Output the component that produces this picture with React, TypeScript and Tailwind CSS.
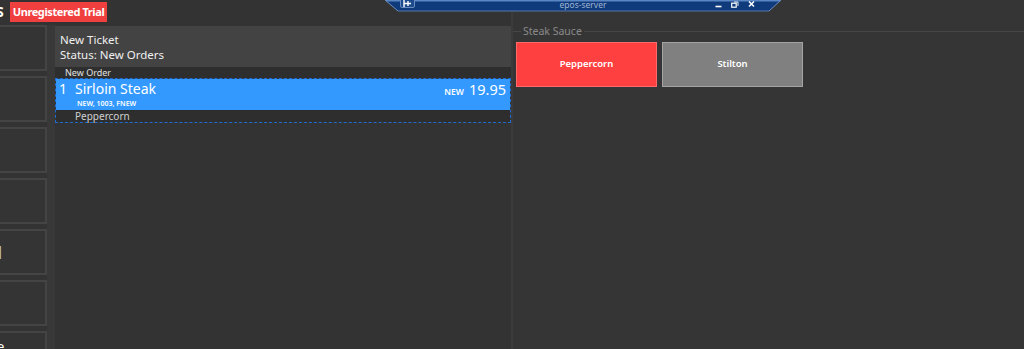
import React from 'react'

const FONT = { fontFamily: '"Noto Sans", "Open Sans", sans-serif' }

function LeftBox({ children }: { children?: React.ReactNode }) {
  return (
    <div className="relative -ml-[3px] h-[46px] shrink-0 border-2 border-[#444444] bg-[#343434]">
      {children}
    </div>
  )
}

function TitleBar() {
  return (
    <div className="absolute left-[385px] top-0 h-[12px] w-[396px]">
      <svg width="396" height="12" className="absolute inset-0">
        <polygon points="0,0 396,0 384,11 13,11" fill="#0f3b7c" />
        <polygon points="0,0 396,0 395,1.5 1.5,1.5" fill="#5a86c4" />
        <line x1="13" y1="11" x2="384" y2="11" stroke="#5577a8" strokeWidth="1" />
        <line x1="0" y1="0" x2="13" y2="11" stroke="#6d8fbf" strokeWidth="1" />
        <line x1="396" y1="0" x2="384" y2="11" stroke="#6d8fbf" strokeWidth="1" />
      </svg>
      <div className="absolute left-[15px] top-[-2px] flex h-[10px] w-[15px] items-center justify-center rounded-[2px] border border-[#6b8cc0] bg-[#1d4a8c]">
        <svg width="9" height="7" viewBox="0 0 9 7">
          <path d="M1 0v7M1 3.5h7M5 1v5" stroke="#ffffff" strokeWidth="1.4" fill="none" />
        </svg>
      </div>
      <div className="absolute left-0 right-0 top-0 text-center text-[8.5px] leading-[9px] text-[#9fb3d3]" style={FONT}>
        epos-server
      </div>
      {/* window controls */}
      <div className="absolute left-[330px] top-[1px] flex items-center gap-[9px]">
        <svg width="7" height="7" viewBox="0 0 7 7">
          <path d="M0.5 5.5h6" stroke="#ffffff" strokeWidth="1.6" />
        </svg>
        <svg width="8" height="7" viewBox="0 0 8 7">
          <rect x="0.7" y="2.2" width="4.5" height="4" stroke="#ffffff" strokeWidth="1.2" fill="none" />
          <path d="M3 1h4v4" stroke="#ffffff" strokeWidth="0.9" fill="none" />
        </svg>
        <svg width="7" height="7" viewBox="0 0 7 7">
          <path d="M1 0.5l5 5M6 0.5l-5 5" stroke="#ffffff" strokeWidth="1.5" />
        </svg>
      </div>
    </div>
  )
}

export default function App() {
  return (
    <div className="relative flex h-[349px] w-[1024px] flex-col overflow-hidden bg-[#333333] text-white" style={FONT}>
      <TitleBar />

      <div className="flex h-[25px] shrink-0 items-start">
        <span className="-ml-[4px] mt-[3px] text-[14px] font-bold leading-[18px] text-white">S</span>
        <div className="ml-[6px] mt-[2px] flex h-[20px] items-center bg-[#f03f3f] px-[3px] text-[11px] font-bold tracking-[-0.4px] text-white">
          Unregistered Trial
        </div>
      </div>

      <div className="flex flex-1">
        <div className="flex w-[47px] shrink-0 flex-col gap-[5px]">
          <LeftBox />
          <LeftBox />
          <LeftBox />
          <LeftBox />
          <LeftBox>
            <span className="absolute left-[-2px] top-[14px] text-[12px] leading-[14px] text-[#dddddd]">|</span>
          </LeftBox>
          <LeftBox />
          <LeftBox>
            <span className="absolute left-[-2px] top-[6px] text-[13px] leading-[14px] text-white">e</span>
          </LeftBox>
        </div>

        <div className="w-[8px] shrink-0 bg-[#383838]" />

        <div className="flex w-[456px] shrink-0 flex-col bg-[#333333] pt-[1px]">
          <div className="flex h-[41px] flex-col justify-center bg-[#434343] pl-[5px] text-[11.5px] leading-[15px] text-[#f0f0f0]">
            <div>New Ticket</div>
            <div>Status: New Orders</div>
          </div>
          <div className="h-[11px] bg-[#2e2e2e] pl-[10px] text-[9px] leading-[11px] text-[#e0e0e0]">New Order</div>
          <div className="border border-dashed border-[#1f6bd0]">
            <div className="flex h-[31px] bg-[#3399ff] pr-[4px]">
              <div className="flex flex-1 flex-col pl-[3px]">
                <div className="flex items-baseline text-[14px] leading-[20px]">
                  <span className="w-[16px]">1</span>
                  <span>Sirloin Steak</span>
                </div>
                <div className="pl-[18px] text-[7px] font-semibold leading-[9px]">NEW, 1003, FNEW</div>
              </div>
              <div className="flex items-baseline gap-[5px] leading-[20px]">
                <span className="text-[8.5px] font-semibold">NEW</span>
                <span className="text-[14.5px]">19.95</span>
              </div>
            </div>
            <div className="h-[12px] border-t border-[#2b2b2b] bg-[#2e2e2e] pl-[19px] text-[10px] leading-[11px] text-[#d0d0d0]">
              Peppercorn
            </div>
          </div>
        </div>

        <div className="-mt-[25px] w-[2px] shrink-0 bg-[#3b3b3b]" />

        <div className="-mt-[25px] flex flex-1 flex-col bg-[#353535]">
          <div className="mt-[24px] flex items-center">
            <div className="h-px w-[8px] bg-[#464646]" />
            <span className="px-[2px] text-[10.5px] leading-[14px] text-[#8a8a8a]">Steak Sauce</span>
            <div className="h-px flex-1 bg-[#464646]" />
          </div>
          <div className="ml-[3px] mt-[4px] flex gap-[5px]">
            <div className="flex h-[45px] w-[141px] items-center justify-center border border-[#ff6a6a] bg-[#ff4040] text-[9.5px] font-semibold text-white">
              Peppercorn
            </div>
            <div className="flex h-[45px] w-[141px] items-center justify-center border border-[#a4a4a4] bg-[#808080] text-[9.5px] font-semibold text-white">
              Stilton
            </div>
          </div>
        </div>
      </div>
    </div>
  )
}
